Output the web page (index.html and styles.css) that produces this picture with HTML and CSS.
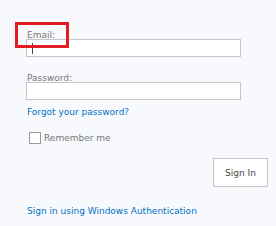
FILE: index.html
```html
<!DOCTYPE html>
<html lang="en">
<head>
    <meta charset="UTF-8">
    <title>Sign In</title>
    <link rel="stylesheet" href="styles.css">
</head>
<body>
    <form class="login-form">
        <div class="field">
            <label class="field-label highlight" for="email">Email:</label>
            <div class="text-input"><span class="caret"></span></div>
        </div>
        <div class="field">
            <label class="field-label" for="password">Password:</label>
            <div class="text-input"></div>
        </div>
        <a class="link forgot" href="#">Forgot your password?</a>
        <label class="remember"><span class="check-box"></span>Remember me</label>
        <div class="button-row">
            <button type="button" class="sign-in">Sign In</button>
        </div>
        <a class="link windows-auth" href="#">Sign in using Windows Authentication</a>
    </form>
</body>
</html>
```

FILE: styles.css
```css
body {
    margin: 0;
    background-color: #f8f9fd;
    font-family: "DejaVu Sans", Verdana, sans-serif;
    font-size: 9px;
    color: #777;
    width: 276px;
    height: 226px;
    overflow: hidden;
}

.login-form {
    display: flex;
    flex-direction: column;
    padding: 31px 0 0 26px;
    width: 215px;
}

.field {
    display: flex;
    flex-direction: column;
    margin-bottom: 17px;
}

.field-label {
    position: relative;
    padding-left: 1px;
    height: 8px;
    line-height: 8px;
}

/* red marker round the email label, drawn over the input */
.field-label.highlight {
    z-index: 1;
}

.field-label.highlight::before {
    content: "";
    position: absolute;
    left: -11px;
    top: -9px;
    width: 48px;
    height: 20px;
    border: 3px solid #e31b23;
}

.text-input {
    box-sizing: border-box;
    height: 18px;
    border: 1px solid #c6c6c6;
    background-color: #fff;
    position: relative;
}

.caret {
    position: absolute;
    left: 5px;
    top: 3px;
    width: 1px;
    height: 11px;
    background-color: #444;
}

.link {
    color: #0072c6;
    text-decoration: none;
    padding-left: 1px;
}

.forgot {
    margin-top: -10px;
}

.remember {
    display: flex;
    align-items: center;
    gap: 3px;
    margin-top: 15px;
    margin-left: 3px;
}

.check-box {
    box-sizing: border-box;
    width: 12px;
    height: 12px;
    border: 1px solid #999;
    background-color: #fff;
}

.button-row {
    display: flex;
    justify-content: flex-end;
    margin-top: 14px;
    margin-right: -27px;
}

.sign-in {
    box-sizing: border-box;
    width: 55px;
    height: 29px;
    border: 1px solid #c6c6c6;
    background-color: #fff;
    color: #444;
    font-family: "DejaVu Sans", Verdana, sans-serif;
    font-size: 9px;
}

.windows-auth {
    margin-top: 19px;
}
```
